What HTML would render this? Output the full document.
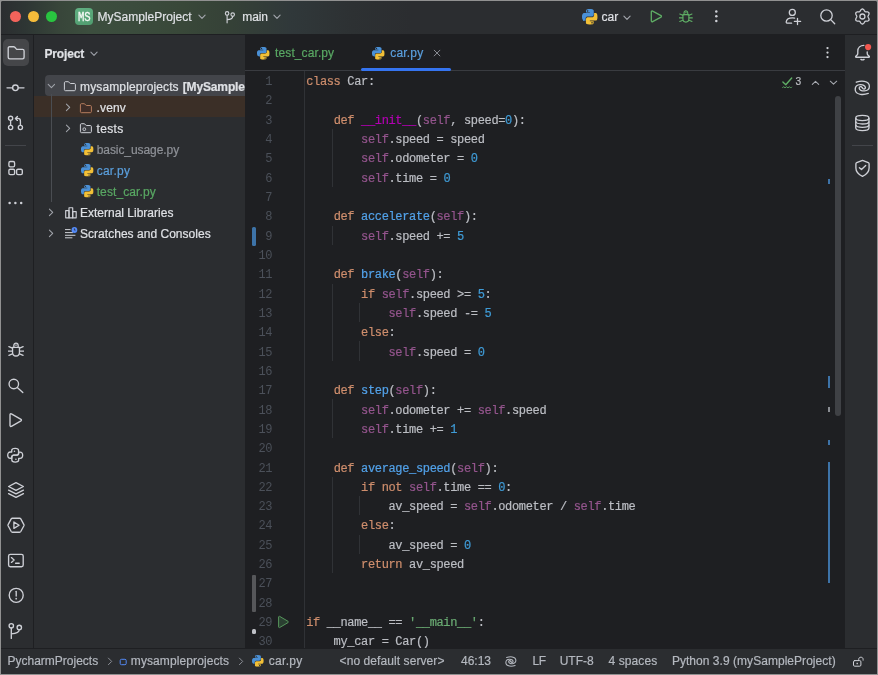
<!DOCTYPE html>
<html lang="en">
<head>
<meta charset="utf-8">
<title>mysampleprojects – car.py</title>
<style>
*{box-sizing:border-box;margin:0;padding:0}
html,body{width:878px;height:675px;overflow:hidden;background:#919191}
body{font-family:"Liberation Sans",sans-serif;font-size:12px;color:#dfe1e5;position:relative}
.abs{position:absolute}
#win{position:absolute;left:1px;top:1px;width:876px;height:673px;background:#2b2d30;overflow:hidden;border-radius:2px 2px 0 0;will-change:transform}
/* coordinates inside #win are target coords minus 1 */
#title{position:absolute;left:0;top:0;width:876px;height:33px;background:linear-gradient(90deg,#2b2d30 0px,#2e3634 25px,#38463a 60px,#3c4e3e 90px,#3b4c3d 130px,#394839 180px,#354137 230px,#30383a 290px,#2d3133 350px,#2b2d30 410px)}
#titleline{position:absolute;left:0;top:33px;width:876px;height:1px;background:#1e1f22}
.t{position:absolute;white-space:pre;line-height:14px;height:14px;-webkit-text-stroke:0.2px}
.dot{position:absolute;width:11px;height:11px;border-radius:50%}
#lstripe{position:absolute;left:0;top:34px;width:32px;height:614px;background:#2b2d30}
#lstripeline{position:absolute;left:32px;top:34px;width:1px;height:614px;background:#1e1f22}
#proj{position:absolute;left:33px;top:34px;width:211px;height:614px;background:#2b2d30;overflow:hidden}
#editor{position:absolute;left:244px;top:34px;width:600px;height:614px;background:#1e1f22;overflow:hidden}
#rstripe{position:absolute;left:844px;top:34px;width:32px;height:614px;background:#2b2d30}
#status{position:absolute;left:0;top:648px;width:876px;height:25px;background:#2b2d30}
#statusline{position:absolute;left:0;top:647px;width:876px;height:1px;background:#1e1f22}
.st{color:#b4b8bf}
svg{position:absolute;overflow:visible}
/* code */
#code{position:absolute;left:0;top:0}
.ln{position:absolute;left:0;width:27.2px;text-align:right;color:#4b5059;font-family:"Liberation Mono",monospace;font-size:12px;letter-spacing:-0.342px;line-height:19.32px;height:19.32px;white-space:pre}
.cl{-webkit-text-stroke:0.2px;position:absolute;left:61.2px;color:#bcbec4;font-family:"Liberation Mono",monospace;font-size:12px;letter-spacing:-0.342px;line-height:19.32px;height:19.32px;white-space:pre}
.k{color:#cf8e6d}.f{color:#52a2ea}.s{color:#94558d}.n{color:#3f9bd6}.m{color:#b200b2}.g{color:#6aab73}
.ig{width:1px;background:#303236}
.mk{left:583px;width:2px;background:#3d73a8}
</style>
</head>
<body>
<div id="win"><svg width="0" height="0" style="position:absolute"><defs>
<symbol id="pyicon" viewBox="1 1 14 14"><path fill="#4a90d6" fill-rule="evenodd" d="M7.9 1 C4.4 1 4.6 2.5 4.6 2.5 V4.1 H8 V4.65 H3.3 C3.3 4.65 1 4.35 1 7.95 C1 11.55 3 11.4 3 11.4 H4.2 V9.7 C4.2 9.7 4.1 7.7 6.2 7.7 H9.6 C9.6 7.7 11.5 7.75 11.5 5.85 V2.7 C11.5 2.7 11.8 1 7.9 1 Z M6.05 2.05 A0.65 0.65 0 1 1 6.04 2.05 Z"/><path fill="#f2c037" fill-rule="evenodd" transform="rotate(180 8 8)" d="M7.9 1 C4.4 1 4.6 2.5 4.6 2.5 V4.1 H8 V4.65 H3.3 C3.3 4.65 1 4.35 1 7.95 C1 11.55 3 11.4 3 11.4 H4.2 V9.7 C4.2 9.7 4.1 7.7 6.2 7.7 H9.6 C9.6 7.7 11.5 7.75 11.5 5.85 V2.7 C11.5 2.7 11.8 1 7.9 1 Z M6.05 2.05 A0.65 0.65 0 1 1 6.04 2.05 Z"/></symbol>
<symbol id="bug" viewBox="0 0 16 16"><g fill="none" stroke-width="1.3" stroke-linecap="round" stroke-linejoin="round"><path d="M4.55 5.4 H11.45 V10.2 C11.45 12.5 9.9 14 8 14 C6.1 14 4.55 12.5 4.55 10.2 Z"/><path d="M5.85 5.4 V3.3 C5.85 2 6.8 1.05 8 1.05 C9.2 1.05 10.15 2 10.15 3.3 V5.4"/><path d="M7.4 3.1 H8.6" stroke-width="0.9"/><path d="M4.4 6.2 L0.9 4.6 M4.4 9.1 H0.3 M4.4 11.8 L0.9 13.3 M11.6 6.2 L15.1 4.6 M11.6 9.1 H15.7 M11.6 11.8 L15.1 13.3"/></g></symbol>
<symbol id="chev" viewBox="0 0 10 6"><path d="M1.9 1.2 L5 4.3 L8.1 1.2" fill="none" stroke-width="1.1" stroke-linecap="round" stroke-linejoin="round"/></symbol>
</defs></svg>

  <div id="title">
<div class="dot" style="left:9px;top:10px;background:#f2635b"></div>
<div class="dot" style="left:26.8px;top:10px;background:#f5bc3a"></div>
<div class="dot" style="left:44.5px;top:10px;background:#29c440"></div>
<div class="abs" style="left:74.2px;top:6.7px;width:17.8px;height:17.8px;border-radius:4px;background:linear-gradient(160deg,#62b083,#4f9c6e)"></div>
<div class="t" style="left:76.6px;top:9.6px;font-family:'Liberation Mono',monospace;font-weight:400;font-size:13.6px;color:#f4f8f5;-webkit-text-stroke:0.35px #f4f8f5;transform:scaleX(0.78);transform-origin:0 0">MS</div>
<div class="t" style="left:96.6px;top:9.1px">MySampleProject</div>
<svg style="left:196.3px;top:12.6px" width="10" height="6" viewBox="0 0 10 6"><path d="M1.9 1.2 L5 4.3 L8.1 1.2" fill="none" stroke="#a4a7ae" stroke-width="1.1" stroke-linecap="round" stroke-linejoin="round"/></svg>
<svg style="left:222px;top:8px" width="14" height="16" viewBox="0 0 14 16"><g fill="none" stroke="#ced0d6" stroke-width="1.15" stroke-linecap="round"><circle cx="4.1" cy="4.4" r="1.75"/><circle cx="9.7" cy="5.6" r="1.75"/><path d="M4.1 6.2 V13.8 M9.7 7.4 C9.7 9.6 7.2 10.4 4.1 10.6"/></g></svg>
<div class="t" style="left:241.3px;top:9.1px;letter-spacing:-0.15px">main</div>
<svg style="left:270.7px;top:12.6px" width="10" height="6" viewBox="0 0 10 6"><path d="M1.9 1.2 L5 4.3 L8.1 1.2" fill="none" stroke="#a4a7ae" stroke-width="1.1" stroke-linecap="round" stroke-linejoin="round"/></svg>
<!-- run config -->
<svg style="left:580.9px;top:7.9px" width="15.7" height="15.7"><use href="#pyicon"/></svg>
<div class="t" style="left:600.6px;top:8.7px">car</div>
<svg style="left:621px;top:14px" width="10" height="6" viewBox="0 0 10 6"><path d="M1.9 1.2 L5 4.3 L8.1 1.2" fill="none" stroke="#a4a7ae" stroke-width="1.1" stroke-linecap="round" stroke-linejoin="round"/></svg>
<svg style="left:648px;top:8px" width="16" height="16" viewBox="0 0 16 16"><path d="M2.3 2.9 C2.3 2.1 3.05 1.7 3.65 2.1 L12 6.6 C12.6 7 12.6 7.7 12 8.1 L3.65 12.6 C3.05 13 2.3 12.5 2.3 11.8 Z" fill="none" stroke="#5fad65" stroke-width="1.3" stroke-linejoin="round"/></svg>
<svg style="left:678px;top:8.6px" width="13.8" height="13.8" viewBox="0 0 16 16"><use href="#bug" stroke="#5fad65"/></svg>
<svg style="left:712.5px;top:8px" width="5" height="16" viewBox="0 0 5 16"><g fill="#ced0d6"><circle cx="2.3" cy="2.6" r="1.25"/><circle cx="2.3" cy="7.3" r="1.25"/><circle cx="2.3" cy="12" r="1.25"/></g></svg>
<!-- right icons -->
<svg style="left:783px;top:6px" width="20" height="20" viewBox="0 0 20 20"><g fill="none" stroke="#ced0d6" stroke-width="1.3" stroke-linecap="round"><circle cx="8.3" cy="5.4" r="3"/><path d="M7.6 16.2 H3.6 C2.6 16.2 2.1 15.6 2.2 14.8 C2.6 12.4 5 10.9 8.4 10.9 C9.2 10.9 9.9 11 10.6 11.2"/><path d="M13.5 11.3 V17.5 M10.4 14.4 H16.6"/></g></svg>
<svg style="left:817px;top:6px" width="20" height="20" viewBox="0 0 20 20"><g fill="none" stroke="#ced0d6" stroke-width="1.3" stroke-linecap="round"><circle cx="8.5" cy="8.5" r="5.7"/><path d="M12.7 12.6 L16.7 16.8"/></g></svg>
<svg style="left:852px;top:6.2px" width="20" height="20" viewBox="0 0 20 20"><g fill="none" stroke="#ced0d6" stroke-width="1.3" stroke-linejoin="round"><path d="M15.00 9.50 L15.11 10.00 L15.38 10.55 L15.73 11.20 L16.00 11.90 L16.08 12.62 L15.90 13.25 L15.44 13.73 L14.78 14.02 L14.03 14.13 L13.30 14.15 L12.69 14.19 L12.20 14.35 L11.82 14.69 L11.48 15.21 L11.10 15.83 L10.62 16.42 L10.04 16.84 L9.40 17.00 L8.76 16.84 L8.18 16.42 L7.70 15.83 L7.32 15.21 L6.98 14.69 L6.60 14.35 L6.11 14.19 L5.50 14.15 L4.77 14.13 L4.02 14.02 L3.36 13.73 L2.90 13.25 L2.72 12.62 L2.80 11.90 L3.07 11.20 L3.42 10.55 L3.69 10.00 L3.80 9.50 L3.69 9.00 L3.42 8.45 L3.07 7.80 L2.80 7.10 L2.72 6.38 L2.90 5.75 L3.36 5.27 L4.02 4.98 L4.77 4.87 L5.50 4.85 L6.11 4.81 L6.60 4.65 L6.98 4.31 L7.32 3.79 L7.70 3.17 L8.18 2.58 L8.76 2.16 L9.40 2.00 L10.04 2.16 L10.62 2.58 L11.10 3.17 L11.48 3.79 L11.82 4.31 L12.20 4.65 L12.69 4.81 L13.30 4.85 L14.03 4.87 L14.78 4.98 L15.44 5.27 L15.90 5.75 L16.08 6.38 L16.00 7.10 L15.73 7.80 L15.38 8.45 L15.11 9.00 Z"/><circle cx="9.4" cy="9.5" r="2.5"/></g></svg>
</div>
  <div id="titleline"></div>
  <div id="lstripe">
<div class="abs" style="left:1.5px;top:4.2px;width:26.6px;height:27px;border-radius:5px;background:#454649"></div>
<!-- folder: target 7.6..23.7 x, 46.1..59.4 y -->
<svg style="left:5px;top:9px" width="20" height="18" viewBox="0 0 20 18"><path d="M2.2 4.2 C2.2 3.3 2.9 2.7 3.7 2.7 H7.6 C8.1 2.7 8.5 2.9 8.8 3.2 L10.3 4.9 C10.6 5.2 11 5.4 11.5 5.4 H16.6 C17.5 5.4 18.1 6.1 18.1 6.9 V13.3 C18.1 14.2 17.4 14.8 16.6 14.8 H3.7 C2.8 14.8 2.2 14.1 2.2 13.3 Z" fill="none" stroke="#ced0d6" stroke-width="1.35" stroke-linejoin="round"/></svg>
<!-- commit: centre (15.4,87.8) -->
<svg style="left:4px;top:45px" width="22" height="16" viewBox="0 0 22 16"><g fill="none" stroke="#ced0d6" stroke-width="1.35" stroke-linecap="round"><circle cx="10.4" cy="7.8" r="2.8"/><path d="M2 7.8 H7.6 M13.2 7.8 H19"/></g></svg>
<!-- pull requests -->
<svg style="left:4px;top:78px" width="22" height="20" viewBox="0 0 22 20"><g fill="none" stroke="#ced0d6" stroke-width="1.35" stroke-linecap="round" stroke-linejoin="round"><circle cx="5.6" cy="5.3" r="2.1"/><circle cx="5.6" cy="14.5" r="2.1"/><circle cx="15.4" cy="14.5" r="2.1"/><path d="M5.6 7.4 V12.4 M15.4 12.4 V8 C15.4 6.4 14.4 5.4 12.8 5.4 H10.6 M12.4 3.4 L10.4 5.4 L12.4 7.4"/></g></svg>
<div class="abs" style="left:4.3px;top:110px;width:20.5px;height:1px;background:#43454a"></div>
<!-- structure -->
<svg style="left:4px;top:122px" width="22" height="20" viewBox="0 0 22 20"><g fill="none" stroke="#ced0d6" stroke-width="1.35"><rect x="3.9" y="4.5" width="5.7" height="5.4" rx="1.4"/><rect x="3.9" y="12.2" width="5.7" height="5.4" rx="1.4"/><rect x="11.6" y="12.2" width="5.7" height="5.4" rx="1.4"/></g></svg>
<svg style="left:4px;top:164px" width="22" height="8" viewBox="0 0 22 8"><g fill="#ced0d6"><circle cx="4.6" cy="4.1" r="1.25"/><circle cx="10.4" cy="4.1" r="1.25"/><circle cx="16.2" cy="4.1" r="1.25"/></g></svg>
<!-- bottom group -->
<svg style="left:6.7px;top:306.5px" width="16" height="16" viewBox="0 0 16 16"><use href="#bug" stroke="#ced0d6"/></svg>
<svg style="left:4px;top:339px" width="22" height="22" viewBox="0 0 22 22"><g fill="none" stroke="#ced0d6" stroke-width="1.35" stroke-linecap="round"><circle cx="8.8" cy="10" r="4.75"/><path d="M12.3 13.5 L17.8 18.6"/></g></svg>
<svg style="left:6px;top:376px" width="18" height="18" viewBox="0 0 18 18"><path d="M3 3.7 C3 2.9 3.8 2.5 4.4 2.9 L14 8.3 C14.6 8.7 14.6 9.5 14 9.9 L4.4 15.3 C3.8 15.7 3 15.2 3 14.5 Z" fill="none" stroke="#ced0d6" stroke-width="1.35" stroke-linejoin="round"/></svg>
<!-- python outline centre (15.7,455) -->
<svg style="left:6.4px;top:411.8px" width="16.4" height="16.4" viewBox="0 0 16 16"><g fill="none" stroke="#ced0d6" stroke-width="1.3" stroke-linejoin="round"><path d="M4.6 11 H3.3 C1.6 11 0.7 9.9 0.7 8 C0.7 6.1 1.6 4.9 3.3 4.9 H4.6 V3.3 C4.6 1.9 5.7 1.3 8 1.3 C10.3 1.3 11.3 1.9 11.3 3.3 V6 C11.3 7.2 10.5 8 9.3 8 H6.7 C5.5 8 4.6 8.8 4.6 10 Z"/><path transform="rotate(180 8 8)" d="M4.6 11 H3.3 C1.6 11 0.7 9.9 0.7 8 C0.7 6.1 1.6 4.9 3.3 4.9 H4.6 V3.3 C4.6 1.9 5.7 1.3 8 1.3 C10.3 1.3 11.3 1.9 11.3 3.3 V6 C11.3 7.2 10.5 8 9.3 8 H6.7 C5.5 8 4.6 8.8 4.6 10 Z"/></g><circle cx="7.3" cy="4.1" r="0.75" fill="#ced0d6"/><circle cx="8.7" cy="11.9" r="0.75" fill="#ced0d6"/></svg>
<!-- layers centre (15.6,490.5) -->
<svg style="left:5.5px;top:446px" width="18" height="18" viewBox="0 0 18 18"><g fill="none" stroke="#ced0d6" stroke-width="1.35" stroke-linejoin="round" stroke-linecap="round"><path d="M9 1.7 L16.4 5.5 L9 9.3 L1.6 5.5 Z"/><path d="M1.6 9.1 L9 12.9 L16.4 9.1"/><path d="M1.6 12.6 L9 16.4 L16.4 12.6"/></g></svg>
<!-- services centre (15.5,525.4) -->
<svg style="left:4.5px;top:481px" width="20" height="18" viewBox="0 0 20 18"><g fill="none" stroke="#ced0d6" stroke-width="1.35" stroke-linejoin="round"><path d="M6.4 2.2 H13.6 C14.1 2.2 14.5 2.4 14.8 2.9 L17.9 8.6 C18.1 9 18.1 9.4 17.9 9.8 L14.8 15.5 C14.5 16 14.1 16.2 13.6 16.2 H6.4 C5.9 16.2 5.5 16 5.2 15.5 L2.1 9.8 C1.9 9.4 1.9 9 2.1 8.6 L5.2 2.9 C5.5 2.4 5.9 2.2 6.4 2.2 Z"/><path d="M7.9 6 L13.1 9.2 L7.9 12.4 Z"/></g></svg>
<!-- terminal: rect 8.1..23.5, 553.8..567 -->
<svg style="left:5px;top:516px" width="20" height="18" viewBox="0 0 20 18"><g fill="none" stroke="#ced0d6" stroke-width="1.35" stroke-linejoin="round" stroke-linecap="round"><rect x="2.6" y="3.3" width="14.6" height="12.4" rx="1.7"/><path d="M5.4 6.6 L8.1 9 L5.4 11.4 M9.6 12.2 H13.2"/></g></svg>
<!-- problems centre (15.7,595.3) r7 -->
<svg style="left:5.5px;top:551px" width="18" height="18" viewBox="0 0 18 18"><g fill="none" stroke="#ced0d6" stroke-width="1.35" stroke-linecap="round"><circle cx="9.2" cy="9.3" r="7"/><path d="M9.2 5.3 V10"/></g><circle cx="9.2" cy="12.7" r="0.85" fill="#ced0d6"/></svg>
<!-- git -->
<svg style="left:5px;top:584px" width="20" height="22" viewBox="0 0 20 22"><g fill="none" stroke="#ced0d6" stroke-width="1.35" stroke-linecap="round"><circle cx="5.3" cy="6.8" r="2.2"/><circle cx="13.3" cy="8.4" r="2.2"/><path d="M5.3 9 V19.4 M13.3 10.6 C13.3 13.6 10 14.6 5.3 14.8"/></g></svg>
</div>
  <div id="lstripeline"></div>
  <div id="proj">
<div class="t" style="left:10.5px;top:11.8px;font-weight:700;letter-spacing:-0.15px">Project</div>
<svg style="left:54.5px;top:16.4px" width="10" height="6" viewBox="0 0 10 6"><use href="#chev" stroke="#9da0a8"/></svg>
<div class="abs" style="left:10.8px;top:40.3px;width:210px;height:21.1px;border-radius:4px 0 0 4px;background:#43454a"></div>
<div class="abs" style="left:0;top:61.4px;width:211px;height:21.1px;background:#3b2f27"></div>
<div class="abs" style="left:17.2px;top:58.5px;width:1px;height:108.5px;background:#4a4d52"></div>
<!-- row 0 -->
<svg style="left:13.3px;top:47.5px" width="9" height="7" viewBox="0 0 9 7"><path d="M1.2 1.4 L4.4 4.7 L7.6 1.4" fill="none" stroke="#a0a3aa" stroke-width="1.05" stroke-linecap="round" stroke-linejoin="round"/></svg>
<svg style="left:29px;top:45px" width="14" height="12" viewBox="0 0 14 12"><path d="M1.4 2.7 C1.4 2.1 1.9 1.7 2.4 1.7 H5.1 C5.4 1.7 5.7 1.8 5.9 2.1 L6.8 3.2 C7 3.4 7.3 3.5 7.6 3.5 H11.4 C12 3.5 12.4 4 12.4 4.5 V9.7 C12.4 10.3 11.9 10.7 11.4 10.7 H2.4 C1.8 10.7 1.4 10.2 1.4 9.7 Z" fill="none" stroke="#ced0d6" stroke-width="1" stroke-linejoin="round"/></svg>
<div class="t" style="left:46.1px;top:44.6px;letter-spacing:0.12px">mysampleprojects <b style="letter-spacing:-0.15px;margin-left:0.6px">[MySampleProject]</b></div>
<!-- row 1 .venv -->
<svg style="left:31px;top:68px" width="6" height="9" viewBox="0 0 6 9"><path d="M1.4 1.1 L4.7 4.4 L1.4 7.7" fill="none" stroke="#a0a3aa" stroke-width="1.05" stroke-linecap="round" stroke-linejoin="round"/></svg>
<svg style="left:45.2px;top:66.6px" width="14" height="12" viewBox="0 0 14 12"><path d="M1.4 2.7 C1.4 2.1 1.9 1.7 2.4 1.7 H5.1 C5.4 1.7 5.7 1.8 5.9 2.1 L6.8 3.2 C7 3.4 7.3 3.5 7.6 3.5 H11.4 C12 3.5 12.4 4 12.4 4.5 V9.7 C12.4 10.3 11.9 10.7 11.4 10.7 H2.4 C1.8 10.7 1.4 10.2 1.4 9.7 Z" fill="#3f2d27" stroke="#b57d5e" stroke-width="1" stroke-linejoin="round"/></svg>
<div class="t" style="left:62.6px;top:65.7px;letter-spacing:0.1px">.venv</div>
<!-- row 2 tests -->
<svg style="left:31px;top:89px" width="6" height="9" viewBox="0 0 6 9"><path d="M1.4 1.1 L4.7 4.4 L1.4 7.7" fill="none" stroke="#a0a3aa" stroke-width="1.05" stroke-linecap="round" stroke-linejoin="round"/></svg>
<svg style="left:45.2px;top:87.2px" width="14" height="12" viewBox="0 0 14 12"><path d="M1.4 2.7 C1.4 2.1 1.9 1.7 2.4 1.7 H5.1 C5.4 1.7 5.7 1.8 5.9 2.1 L6.8 3.2 C7 3.4 7.3 3.5 7.6 3.5 H11.4 C12 3.5 12.4 4 12.4 4.5 V9.7 C12.4 10.3 11.9 10.7 11.4 10.7 H2.4 C1.8 10.7 1.4 10.2 1.4 9.7 Z" fill="#393b40" stroke="#ced0d6" stroke-width="1" stroke-linejoin="round"/><circle cx="5.3" cy="7.2" r="1.4" fill="none" stroke="#ced0d6" stroke-width="0.9"/></svg>
<div class="t" style="left:62.6px;top:86.8px;letter-spacing:0.3px">tests</div>
<!-- row 3..5 py files -->
<svg style="left:46.9px;top:108.1px" width="12.6" height="12.6"><use href="#pyicon"/></svg>
<div class="t" style="left:62.7px;top:107.9px;color:#8e9197;letter-spacing:-0.07px">basic_usage.py</div>
<svg style="left:46.9px;top:129.2px" width="12.6" height="12.6"><use href="#pyicon"/></svg>
<div class="t" style="left:62.7px;top:129.0px;color:#5a9fdd;letter-spacing:0.25px">car.py</div>
<svg style="left:46.9px;top:150.3px" width="12.6" height="12.6"><use href="#pyicon"/></svg>
<div class="t" style="left:62.7px;top:150.1px;color:#59a863;letter-spacing:0.1px">test_car.py</div>
<!-- row 6 external libs -->
<svg style="left:14.3px;top:173.2px" width="6" height="9" viewBox="0 0 6 9"><path d="M1.4 1.1 L4.7 4.4 L1.4 7.7" fill="none" stroke="#a0a3aa" stroke-width="1.05" stroke-linecap="round" stroke-linejoin="round"/></svg>
<svg style="left:29.5px;top:171px" width="14" height="13" viewBox="0 0 14 13"><g fill="none" stroke="#ced0d6" stroke-width="1.15" stroke-linejoin="round"><path d="M1.7 4.6 H5 V11.8 H1.7 Z"/><path d="M5 1.7 H8.7 V11.8 H5 Z"/><path d="M8.7 5.6 H12.2 V11.8 H8.7 Z"/></g></svg>
<div class="t" style="left:46.0px;top:171.2px;letter-spacing:0px">External Libraries</div>
<!-- row 7 scratches -->
<svg style="left:14.3px;top:194.3px" width="6" height="9" viewBox="0 0 6 9"><path d="M1.4 1.1 L4.7 4.4 L1.4 7.7" fill="none" stroke="#a0a3aa" stroke-width="1.05" stroke-linecap="round" stroke-linejoin="round"/></svg>
<svg style="left:29.5px;top:191px" width="15" height="14" viewBox="0 0 15 14"><g fill="none" stroke="#ced0d6" stroke-width="1" stroke-linecap="round"><path d="M1.4 3.6 H6.2 M1.4 6.6 H8.6 M1.4 9.3 H11 M1.4 11.8 H8"/></g><circle cx="10.4" cy="4" r="2.9" fill="#548af7"/><path d="M10.4 2.4 V4.1 H11.6" fill="none" stroke="#2b2d30" stroke-width="0.8"/></svg>
<div class="t" style="left:46.0px;top:192.3px;letter-spacing:0.03px">Scratches and Consoles</div>
</div>
  <div id="editor">
<!-- tabs -->
<svg style="left:12px;top:11.5px" width="12.7" height="12.7"><use href="#pyicon"/></svg>
<div class="t" style="left:30.1px;top:10.8px;color:#59a863;letter-spacing:0.1px">test_car.py</div>
<svg style="left:126.5px;top:11.5px" width="12.7" height="12.7"><use href="#pyicon"/></svg>
<div class="t" style="left:145.2px;top:10.8px;color:#5a9fdd;letter-spacing:0.2px">car.py</div>
<svg style="left:188px;top:13.9px" width="8" height="8" viewBox="0 0 8 8"><path d="M1.2 1.2 L6.9 6.9 M6.9 1.2 L1.2 6.9" fill="none" stroke="#8b8e95" stroke-width="1" stroke-linecap="round"/></svg>
<div class="abs" style="left:0;top:35px;width:600px;height:1px;background:#393b40"></div>
<div class="abs" style="left:116px;top:33px;width:90px;height:3px;border-radius:1.5px;background:#3574f0"></div>
<svg style="left:579.6px;top:11px" width="5" height="14" viewBox="0 0 5 14"><g fill="#ced0d6"><circle cx="2.5" cy="2.1" r="1.15"/><circle cx="2.5" cy="6.6" r="1.15"/><circle cx="2.5" cy="11.1" r="1.15"/></g></svg>
<!-- gutter -->
<div class="abs" style="left:59px;top:36px;width:1px;height:578px;background:#303236"></div>
<div class="abs" style="left:7px;top:192px;width:3.5px;height:19.3px;border-radius:1.5px;background:#3d73a8"></div>
<div class="abs" style="left:7px;top:540px;width:3.6px;height:36.6px;border-radius:1px;background:#56575a"></div>
<div class="abs" style="left:7px;top:594.2px;width:3.5px;height:5.3px;border-radius:1.5px;background:#bfc1c7"></div>
<svg style="left:32px;top:580px" width="13" height="14" viewBox="0 0 13 14"><path d="M1.6 2 C1.6 1.4 2.2 1.1 2.7 1.4 L11 6.3 C11.5 6.6 11.5 7.3 11 7.6 L2.7 12.5 C2.2 12.8 1.6 12.5 1.6 11.9 Z" fill="#2a3f31" stroke="#57965c" stroke-width="1" stroke-linejoin="round"/></svg>
<!-- indent guides -->
<div class="abs ig" style="left:87px;top:93.9px;height:58px"></div>
<div class="abs ig" style="left:87px;top:190.5px;height:19.3px"></div>
<div class="abs ig" style="left:87px;top:248.5px;height:77.3px"></div>
<div class="abs ig" style="left:114px;top:267.7px;height:19.3px"></div>
<div class="abs ig" style="left:114px;top:306.4px;height:19.3px"></div>
<div class="abs ig" style="left:87px;top:364.3px;height:38.7px"></div>
<div class="abs ig" style="left:87px;top:441.6px;height:96.6px"></div>
<div class="abs ig" style="left:114px;top:460.9px;height:19.3px"></div>
<div class="abs ig" style="left:114px;top:499.6px;height:19.3px"></div>
<div class="ln" style="top:38.10px">1</div>
<div class="cl" style="top:38.10px"><span class="k">class</span> Car:</div>
<div class="ln" style="top:57.42px">2</div>
<div class="ln" style="top:76.74px">3</div>
<div class="cl" style="top:76.74px">    <span class="k">def</span> <span class="m">__init__</span>(<span class="s">self</span>, speed=<span class="n">0</span>):</div>
<div class="ln" style="top:96.06px">4</div>
<div class="cl" style="top:96.06px">        <span class="s">self</span>.speed = speed</div>
<div class="ln" style="top:115.38px">5</div>
<div class="cl" style="top:115.38px">        <span class="s">self</span>.odometer = <span class="n">0</span></div>
<div class="ln" style="top:134.70px">6</div>
<div class="cl" style="top:134.70px">        <span class="s">self</span>.time = <span class="n">0</span></div>
<div class="ln" style="top:154.02px">7</div>
<div class="ln" style="top:173.34px">8</div>
<div class="cl" style="top:173.34px">    <span class="k">def</span> <span class="f">accelerate</span>(<span class="s">self</span>):</div>
<div class="ln" style="top:192.66px">9</div>
<div class="cl" style="top:192.66px">        <span class="s">self</span>.speed += <span class="n">5</span></div>
<div class="ln" style="top:211.98px">10</div>
<div class="ln" style="top:231.30px">11</div>
<div class="cl" style="top:231.30px">    <span class="k">def</span> <span class="f">brake</span>(<span class="s">self</span>):</div>
<div class="ln" style="top:250.62px">12</div>
<div class="cl" style="top:250.62px">        <span class="k">if</span> <span class="s">self</span>.speed &gt;= <span class="n">5</span>:</div>
<div class="ln" style="top:269.94px">13</div>
<div class="cl" style="top:269.94px">            <span class="s">self</span>.speed -= <span class="n">5</span></div>
<div class="ln" style="top:289.26px">14</div>
<div class="cl" style="top:289.26px">        <span class="k">else</span>:</div>
<div class="ln" style="top:308.58px">15</div>
<div class="cl" style="top:308.58px">            <span class="s">self</span>.speed = <span class="n">0</span></div>
<div class="ln" style="top:327.90px">16</div>
<div class="ln" style="top:347.22px">17</div>
<div class="cl" style="top:347.22px">    <span class="k">def</span> <span class="f">step</span>(<span class="s">self</span>):</div>
<div class="ln" style="top:366.54px">18</div>
<div class="cl" style="top:366.54px">        <span class="s">self</span>.odometer += <span class="s">self</span>.speed</div>
<div class="ln" style="top:385.86px">19</div>
<div class="cl" style="top:385.86px">        <span class="s">self</span>.time += <span class="n">1</span></div>
<div class="ln" style="top:405.18px">20</div>
<div class="ln" style="top:424.50px">21</div>
<div class="cl" style="top:424.50px">    <span class="k">def</span> <span class="f">average_speed</span>(<span class="s">self</span>):</div>
<div class="ln" style="top:443.82px">22</div>
<div class="cl" style="top:443.82px">        <span class="k">if not</span> <span class="s">self</span>.time == <span class="n">0</span>:</div>
<div class="ln" style="top:463.14px">23</div>
<div class="cl" style="top:463.14px">            av_speed = <span class="s">self</span>.odometer / <span class="s">self</span>.time</div>
<div class="ln" style="top:482.46px">24</div>
<div class="cl" style="top:482.46px">        <span class="k">else</span>:</div>
<div class="ln" style="top:501.78px">25</div>
<div class="cl" style="top:501.78px">            av_speed = <span class="n">0</span></div>
<div class="ln" style="top:521.10px">26</div>
<div class="cl" style="top:521.10px">        <span class="k">return</span> av_speed</div>
<div class="ln" style="top:540.42px">27</div>
<div class="ln" style="top:559.74px">28</div>
<div class="ln" style="top:579.06px">29</div>
<div class="cl" style="top:579.06px"><span class="k">if</span> __name__ == <span class="g">'__main__'</span>:</div>
<div class="ln" style="top:598.38px">30</div>
<div class="cl" style="top:598.38px">    my_car = Car()</div>
<!-- inspection widget -->
<svg style="left:536px;top:41px" width="14" height="14" viewBox="0 0 14 14"><path d="M1.9 6 L4.8 8.8 L10.7 2" fill="none" stroke="#5fad65" stroke-width="1.4" stroke-linecap="round" stroke-linejoin="round"/><path d="M1.3 12 L2.7 10.6 L4.1 12 L5.5 10.6 L6.9 12 L8.3 10.6 L9.7 12 L10.9 10.8" fill="none" stroke="#5fad65" stroke-width="0.9" stroke-linejoin="round"/></svg>
<div class="t" style="left:550.6px;top:40.4px;font-size:10.2px;color:#bcbec4">3</div>
<svg style="left:565.5px;top:45px" width="9" height="6" viewBox="0 0 9 6"><path d="M1.3 4.4 L4.5 1.4 L7.7 4.4" fill="none" stroke="#a8abb2" stroke-width="1.05" stroke-linecap="round" stroke-linejoin="round"/></svg>
<svg style="left:584.2px;top:44.6px" width="9" height="6" viewBox="0 0 9 6"><path d="M1.3 1.2 L4.5 4.2 L7.7 1.2" fill="none" stroke="#a8abb2" stroke-width="1.05" stroke-linecap="round" stroke-linejoin="round"/></svg>
<!-- scrollbar + stripe marks -->
<div class="abs" style="left:590.2px;top:60.5px;width:6px;height:320px;border-radius:3px;background:#3f4145"></div>
<div class="abs mk" style="top:143.5px;height:5.5px"></div>
<div class="abs mk" style="top:340.7px;height:12.3px"></div>
<div class="abs mk" style="top:372.4px;height:5px;background:#8a8d93"></div>
<div class="abs mk" style="top:405px;height:4.5px"></div>
<div class="abs mk" style="top:427.4px;height:120.4px"></div>
</div>
  <div id="rstripe">
<!-- bell origin target (854,42) -> rel (9,7) -->
<svg style="left:9px;top:7px" width="18" height="20" viewBox="0 0 18 20"><g fill="none" stroke="#ced0d6" stroke-width="1.35" stroke-linecap="round" stroke-linejoin="round"><path d="M9.9 3.3 C6.2 3.3 3.8 5.6 3.8 9 V11.2 C3.8 12 3.6 12.4 3.1 13 L1.8 14.3 C1.4 14.7 1.6 15.2 2.2 15.2 H14.8 C15.4 15.2 15.6 14.7 15.2 14.3 L13.9 13 C13.4 12.4 13.2 12 13.2 11.2 V9.8"/><path d="M6.9 17.4 C7.7 17.9 9.3 17.9 10.1 17.4"/></g><circle cx="14.1" cy="5.1" r="3.1" fill="#f2574f"/></svg>
<!-- swirl origin (854,80) -> rel (9,45) -->
<svg style="left:9px;top:45px" width="17" height="17" viewBox="0 0 17 17"><g fill="none" stroke="#ced0d6" stroke-width="1.35" stroke-linecap="round"><path id="arm" d="M2.3 2.2 C5 1.2 8 0.9 10.2 1.3 C13.5 1.9 15.5 4 15.4 6.5 C15.3 9 13.4 10.7 10.5 10.9 C7.8 11.1 5.3 10 5.2 8.1 C5.1 6.3 7.3 5.9 8.3 7.8"/><path transform="rotate(180 8.3 7.8)" d="M2.3 2.2 C5 1.2 8 0.9 10.2 1.3 C13.5 1.9 15.5 4 15.4 6.5 C15.3 9 13.4 10.7 10.5 10.9 C7.8 11.1 5.3 10 5.2 8.1 C5.1 6.3 7.3 5.9 8.3 7.8"/></g></svg>
<!-- database origin (854,114) -> rel (9,79) -->
<svg style="left:9px;top:79px" width="17" height="18" viewBox="0 0 17 18"><g fill="none" stroke="#ced0d6" stroke-width="1.35"><ellipse cx="8.35" cy="4" rx="6.6" ry="2.6"/><path d="M1.75 4 V14 A6.6 2.6 0 0 0 14.95 14 V4"/><path d="M1.75 7.4 A6.6 2.6 0 0 0 14.95 7.4"/><path d="M1.75 10.7 A6.6 2.6 0 0 0 14.95 10.7"/></g></svg>
<div class="abs" style="left:7px;top:110px;width:21px;height:1px;background:#43454a"></div>
<!-- shield origin (854,158) -> rel (9,123) -->
<svg style="left:9px;top:123px" width="17" height="20" viewBox="0 0 17 20"><g fill="none" stroke="#ced0d6" stroke-width="1.35" stroke-linejoin="round" stroke-linecap="round"><path d="M8.5 2.4 L14.3 4.7 C14.8 4.9 15.1 5.3 15.1 5.8 V10 C15.1 13.6 12.6 16.4 8.5 18.4 C4.4 16.4 1.9 13.6 1.9 10 V5.8 C1.9 5.3 2.2 4.9 2.7 4.7 Z"/><path d="M5.4 9.7 L7.5 11.6 L11.7 7.4"/></g></svg>
</div>
  <div id="statusline"></div>
  <div id="status">
<div class="t st" style="left:6.5px;top:5px">PycharmProjects</div>
<svg style="left:105.5px;top:8.3px" width="6" height="9" viewBox="0 0 6 9"><path d="M1.4 1.1 L4.7 4.4 L1.4 7.7" fill="none" stroke="#8b8e95" stroke-width="1" stroke-linecap="round" stroke-linejoin="round"/></svg>
<svg style="left:118px;top:8.6px" width="9" height="8" viewBox="0 0 9 8"><rect x="1.2" y="1.3" width="6" height="5.4" rx="1.3" fill="none" stroke="#548af7" stroke-width="1"/></svg>
<div class="t st" style="left:129.8px;top:5px;letter-spacing:0.1px">mysampleprojects</div>
<svg style="left:237px;top:8.3px" width="6" height="9" viewBox="0 0 6 9"><path d="M1.4 1.1 L4.7 4.4 L1.4 7.7" fill="none" stroke="#8b8e95" stroke-width="1" stroke-linecap="round" stroke-linejoin="round"/></svg>
<svg style="left:250.5px;top:6.3px" width="11.8" height="11.8"><use href="#pyicon"/></svg>
<div class="t st" style="left:267.8px;top:5px;letter-spacing:0.3px">car.py</div>
<div class="t st" style="left:338.6px;top:5px;letter-spacing:0.08px">&lt;no default server&gt;</div>
<div class="t st" style="left:460px;top:5px">46:13</div>
<svg style="left:504px;top:6.6px" width="12" height="12" viewBox="0 0 17 17"><g fill="none" stroke="#b4b8bf" stroke-width="1.5" stroke-linecap="round"><path d="M2.3 2.2 C5 1.2 8 0.9 10.2 1.3 C13.5 1.9 15.5 4 15.4 6.5 C15.3 9 13.4 10.7 10.5 10.9 C7.8 11.1 5.3 10 5.2 8.1 C5.1 6.3 7.3 5.9 8.3 7.8"/><path transform="rotate(180 8.3 7.8)" d="M2.3 2.2 C5 1.2 8 0.9 10.2 1.3 C13.5 1.9 15.5 4 15.4 6.5 C15.3 9 13.4 10.7 10.5 10.9 C7.8 11.1 5.3 10 5.2 8.1 C5.1 6.3 7.3 5.9 8.3 7.8"/></g></svg>
<div class="t st" style="left:531.6px;top:5px;letter-spacing:-0.5px">LF</div>
<div class="t st" style="left:558.7px;top:5px">UTF-8</div>
<div class="t st" style="left:607.4px;top:5px;letter-spacing:0.12px">4 spaces</div>
<div class="t st" style="left:670.9px;top:5px;letter-spacing:0.04px">Python 3.9 (mySampleProject)</div>
<!-- lock: target x 853.4..864, y 657..667.3 -> rel (852.4, 8) -->
<svg style="left:851.4px;top:7px" width="13" height="12" viewBox="0 0 13 12"><g fill="none" stroke="#ced0d6" stroke-width="1" stroke-linecap="round"><rect x="1.5" y="4.6" width="7.4" height="5.6" rx="1.2"/><path d="M6.7 4.4 V3.4 C6.7 2 7.6 1.2 8.9 1.2 C10.2 1.2 11.1 2 11.1 3.4 V4.2"/></g><rect x="4.5" y="6.8" width="1.4" height="1.4" fill="#ced0d6"/></svg>
</div>
</div>
</body>
</html>
